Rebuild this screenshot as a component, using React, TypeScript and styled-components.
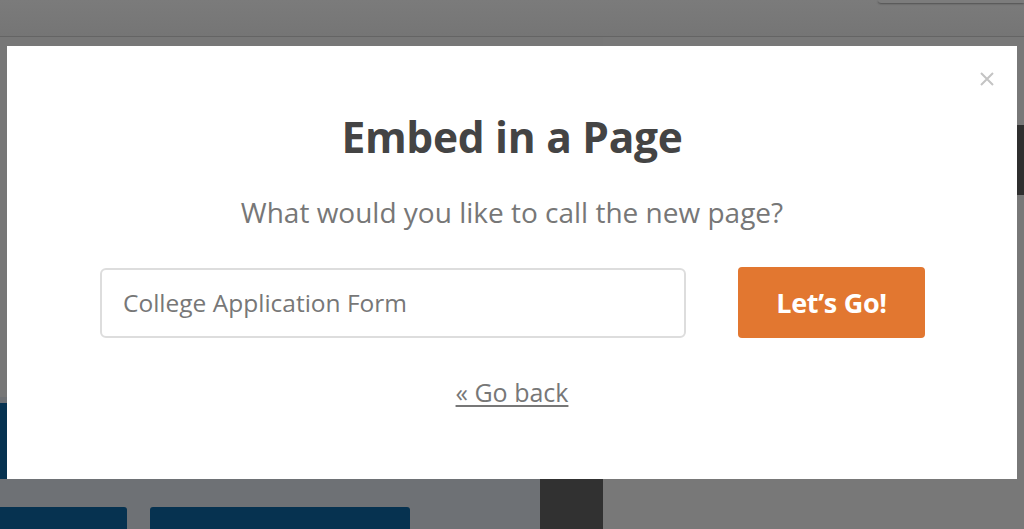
import { createGlobalStyle } from "styled-components"
import styled from "styled-components"

const GlobalStyle = createGlobalStyle`
  html, body {
    margin: 0;
    padding: 0;
    width: 1024px;
    height: 529px;
    overflow: hidden;
    font-family: "Open Sans", "Noto Sans", "Liberation Sans", sans-serif;
  }
`

const Page = styled.div`
  position: relative;
  width: 1024px;
  height: 529px;
  display: flex;
  flex-direction: column;
  background: #777777;
  overflow: hidden;
`

const TopBar = styled.div`
  height: 36px;
  flex-shrink: 0;
  display: flex;
  justify-content: flex-end;
  background: linear-gradient(#7b7b7b, #757575);
  border-bottom: 1px solid #646464;
`

const TopPanel = styled.div`
  width: 146px;
  height: 3px;
  background: #7c7c7c;
  border-bottom-left-radius: 3px;
  box-shadow: 0 1px 2px rgba(0, 0, 0, 0.35);
`

const Body = styled.div`
  flex: 1;
  display: grid;
  grid-template-columns: 540px 63px 1fr;
`

const LeftColumn = styled.div`
  display: flex;
  flex-direction: column;
  justify-content: flex-end;
  gap: 28px;
  background: linear-gradient(#777777 0, #777777 360px, #6e7175 360px);
`

const NavyPanel = styled.div`
  height: 76px;
  width: 127px;
  background: #063250;
`

const CardRow = styled.div`
  display: flex;
  gap: 23px;
  height: 22px;
`

const NavyCard = styled.div<{ $width: number }>`
  width: ${p => p.$width}px;
  background: #063250;
  border-radius: 0 3px 0 0;
  &:last-child {
    border-radius: 3px 3px 0 0;
  }
`

const DarkColumn = styled.div`
  margin-top: 300px;
  background: #313131;
`

const RightColumn = styled.div`
  display: flex;
  flex-direction: column;
  align-items: flex-end;
  background: #787878;
`

const SideTab = styled.div`
  margin-top: 88px;
  width: 12px;
  height: 70px;
  background: #2f2f2f;
`

const Modal = styled.div`
  position: absolute;
  left: 7px;
  top: 46px;
  width: 1010px;
  height: 433px;
  box-sizing: border-box;
  background: #ffffff;
  display: flex;
  flex-direction: column;
  align-items: center;
  padding-top: 64px;
`

const CloseButton = styled.button`
  position: absolute;
  top: 24px;
  right: 21px;
  width: 18px;
  height: 18px;
  padding: 0;
  border: none;
  background: none;
  cursor: pointer;
  display: flex;
  align-items: center;
  justify-content: center;
`

const Title = styled.h2`
  margin: 0;
  font-size: 42.5px;
  line-height: 54px;
  font-weight: 700;
  color: #444444;
  letter-spacing: -0.3px;
`

const Subtitle = styled.p`
  margin: 30px 0 0;
  font-size: 28px;
  line-height: 36px;
  color: #777777;
`

const FormRow = styled.div`
  display: flex;
  align-items: center;
  gap: 52px;
  margin-top: 37px;
  margin-left: 1px;
`

const NameInput = styled.input`
  width: 586px;
  height: 70px;
  box-sizing: border-box;
  border: 2px solid #dddddd;
  border-radius: 6px;
  padding: 0 21px;
  font-family: inherit;
  font-size: 24.5px;
  color: #777777;
  outline: none;
`

const GoButton = styled.button`
  width: 187px;
  height: 71px;
  border: none;
  border-radius: 4px;
  background: #e27730;
  color: #ffffff;
  font-family: inherit;
  font-size: 27px;
  font-weight: 700;
  letter-spacing: -0.3px;
  cursor: pointer;
`

const BackLink = styled.a`
  margin-top: 37px;
  font-size: 25px;
  line-height: 34px;
  color: #777777;
  text-decoration: underline;
  text-underline-offset: 3px;
  cursor: pointer;
`

export default function App() {
  return (
    <>
      <GlobalStyle />
      <Page>
        <TopBar>
          <TopPanel />
        </TopBar>
        <Body>
          <LeftColumn>
            <NavyPanel />
            <CardRow>
              <NavyCard $width={127} />
              <NavyCard $width={260} />
            </CardRow>
          </LeftColumn>
          <DarkColumn />
          <RightColumn>
            <SideTab />
          </RightColumn>
        </Body>
        <Modal>
          <CloseButton aria-label="Close">
            <svg width="14" height="14" viewBox="0 0 14 14">
              <path d="M1 1 L13 13 M13 1 L1 13" stroke="#c4c4c4" strokeWidth="2" />
            </svg>
          </CloseButton>
          <Title>Embed in a Page</Title>
          <Subtitle>What would you like to call the new page?</Subtitle>
          <FormRow>
            <NameInput defaultValue="College Application Form" />
            <GoButton>Let’s Go!</GoButton>
          </FormRow>
          <BackLink>« Go back</BackLink>
        </Modal>
      </Page>
    </>
  )
}
